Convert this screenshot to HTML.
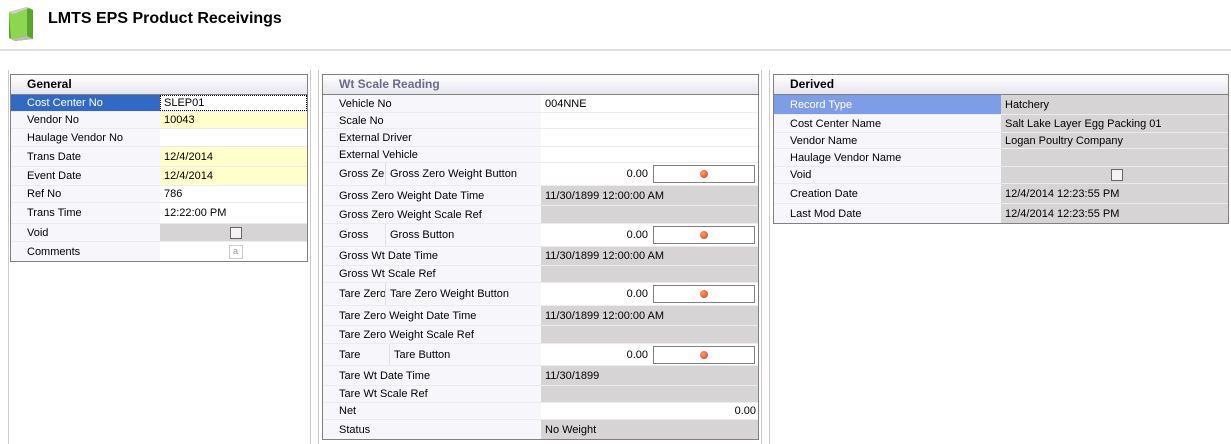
<!DOCTYPE html><html><head><style>
body{margin:0;width:1231px;height:444px;background:#fff;font-family:"Liberation Sans",Tahoma,sans-serif;font-size:11px;color:#000;position:relative;overflow:hidden}
.a{position:absolute}
.box{position:absolute;border:1px solid #808080;background:#fff}
.hd{height:19px;background:linear-gradient(#fff,#e6e6ee);border-bottom:1px solid #808080;font-weight:bold;font-size:12px;line-height:19px;padding-left:16px}
.r{display:flex;border-bottom:1px solid #ececf0;box-sizing:border-box}
.l{background:#f7f7fb;padding-left:16px;display:flex;align-items:center;box-sizing:border-box;white-space:nowrap;overflow:hidden}
.v{flex:1;display:flex;align-items:center;padding-left:4px;white-space:nowrap;box-sizing:border-box}
.g{background:#d6d4d4}.y{background:#ffffcc}
.sel{background:#316ac5;color:#fff}.sel2{background:#7d9de6;color:#fff}
.cb{width:10px;height:10px;border:1px solid #666;background:#f4f4f4;margin:auto}
.btn{width:102px;height:18px;border:1px solid #808080;box-sizing:border-box;margin-left:5px;margin-right:3px;display:flex;align-items:center;justify-content:center;background:#fff}
.dot{width:8px;height:8px;border-radius:50%;background:radial-gradient(circle at 35% 35%,#f9a070,#d83a10)}
.sub{border-left:1px solid #e0e0e8;padding-left:4px;margin-left:0;height:100%;display:flex;align-items:center}
</style></head><body>
<svg class="a" style="left:7px;top:3px" width="28" height="40"><path d="M2 9 L20 4 L26 7 L26 36 L8 38 L2 35Z" fill="#5aa62c"/><path d="M2 9 L20 4 L20 33 L4 36Z" fill="#8fd650"/><path d="M2 9 L20 4 L22 5 L6 11Z" fill="#cfcfcf"/><path d="M4 36 L20 33 L26 36 L8 38Z" fill="#bbb"/></svg>
<div class="a" style="left:48px;top:10px;font-size:16px;font-weight:bold">LMTS EPS Product Receivings</div>
<div class="a" style="left:0;top:49px;width:1231px;height:2px;background:#e0e0e0"></div>
<div class="a" style="left:8px;top:70px;width:1px;height:374px;background:#ccc"></div>
<div class="a" style="left:310px;top:70px;width:1px;height:374px;background:#ccc"></div>
<div class="a" style="left:318px;top:70px;width:1px;height:374px;background:#ccc"></div>
<div class="a" style="left:761px;top:70px;width:1px;height:374px;background:#ccc"></div>
<div class="a" style="left:769px;top:70px;width:1px;height:374px;background:#ccc"></div>

<div class="box" style="left:10px;top:74px;width:296px;height:186px">
<div class="hd">General</div>
<div class="r" style="height:17px"><div class="l sel" style="width:149px">Cost Center No</div><div class="v" style="outline:1px dotted #000;outline-offset:-1px">SLEP01</div></div>
<div class="r" style="height:17px"><div class="l" style="width:149px">Vendor No</div><div class="v y">10043</div></div>
<div class="r" style="height:18px"><div class="l" style="width:149px">Haulage Vendor No</div><div class="v"></div></div>
<div class="r" style="height:20px"><div class="l" style="width:149px">Trans Date</div><div class="v y">12/4/2014</div></div>
<div class="r" style="height:19px"><div class="l" style="width:149px">Event Date</div><div class="v y">12/4/2014</div></div>
<div class="r" style="height:17px"><div class="l" style="width:149px">Ref No</div><div class="v">786</div></div>
<div class="r" style="height:21px"><div class="l" style="width:149px">Trans Time</div><div class="v">12:22:00 PM</div></div>
<div class="r" style="height:18px"><div class="l" style="width:149px">Void</div><div class="v g"><div class="cb"></div></div></div>
<div class="r" style="height:19px;border:0"><div class="l" style="width:149px">Comments</div><div class="v"><div style="margin:auto;width:12px;height:12px;border:1px solid #ccc;font-size:9px;color:#999;text-align:center;line-height:11px">a</div></div></div>
</div>

<div class="box" style="left:322px;top:74px;width:435px;height:364px">
<div class="hd" style="color:#6a6a8c">Wt Scale Reading</div>
<div class="r" style="height:18px"><div class="l" style="width:218px">Vehicle No</div><div class="v">004NNE</div></div>
<div class="r" style="height:16px"><div class="l" style="width:218px">Scale No</div><div class="v"></div></div>
<div class="r" style="height:18px"><div class="l" style="width:218px">External Driver</div><div class="v"></div></div>
<div class="r" style="height:16px"><div class="l" style="width:218px">External Vehicle</div><div class="v"></div></div>
<div class="r" style="height:23px"><div class="l" style="width:218px"><span style="width:46px;overflow:hidden;display:inline-block">Gross Zero</span><span class="sub">Gross Zero Weight Button</span></div><div class="v" style="justify-content:flex-end">0.00<div class="btn"><div class="dot"></div></div></div></div>
<div class="r" style="height:20px"><div class="l" style="width:218px">Gross Zero Weight Date Time</div><div class="v g">11/30/1899 12:00:00 AM</div></div>
<div class="r" style="height:18px"><div class="l" style="width:218px">Gross Zero Weight Scale Ref</div><div class="v g"></div></div>
<div class="r" style="height:23px"><div class="l" style="width:218px"><span style="width:46px;display:inline-block">Gross</span><span class="sub">Gross Button</span></div><div class="v" style="justify-content:flex-end">0.00<div class="btn"><div class="dot"></div></div></div></div>
<div class="r" style="height:19px"><div class="l" style="width:218px">Gross Wt Date Time</div><div class="v g">11/30/1899 12:00:00 AM</div></div>
<div class="r" style="height:17px"><div class="l" style="width:218px">Gross Wt Scale Ref</div><div class="v g"></div></div>
<div class="r" style="height:23px"><div class="l" style="width:218px"><span style="width:46px;overflow:hidden;display:inline-block">Tare Zero</span><span class="sub">Tare Zero Weight Button</span></div><div class="v" style="justify-content:flex-end">0.00<div class="btn"><div class="dot"></div></div></div></div>
<div class="r" style="height:20px"><div class="l" style="width:218px">Tare Zero Weight Date Time</div><div class="v g">11/30/1899 12:00:00 AM</div></div>
<div class="r" style="height:18px"><div class="l" style="width:218px">Tare Zero Weight Scale Ref</div><div class="v g"></div></div>
<div class="r" style="height:22px"><div class="l" style="width:218px"><span style="width:50px;display:inline-block">Tare</span><span class="sub">Tare Button</span></div><div class="v" style="justify-content:flex-end">0.00<div class="btn"><div class="dot"></div></div></div></div>
<div class="r" style="height:20px"><div class="l" style="width:218px">Tare Wt Date Time</div><div class="v g">11/30/1899</div></div>
<div class="r" style="height:17px"><div class="l" style="width:218px">Tare Wt Scale Ref</div><div class="v g"></div></div>
<div class="r" style="height:17px"><div class="l" style="width:218px">Net</div><div class="v" style="justify-content:flex-end;padding-right:2px">0.00</div></div>
<div class="r" style="height:19px;border:0"><div class="l" style="width:218px">Status</div><div class="v g">No Weight</div></div>
</div>

<div class="box" style="left:773px;top:74px;width:454px;height:148px">
<div class="hd">Derived</div>
<div class="r" style="height:20px"><div class="l sel2" style="width:227px">Record Type</div><div class="v g">Hatchery</div></div>
<div class="r" style="height:18px"><div class="l" style="width:227px">Cost Center Name</div><div class="v g">Salt Lake Layer Egg Packing 01</div></div>
<div class="r" style="height:16px"><div class="l" style="width:227px">Vendor Name</div><div class="v g">Logan Poultry Company</div></div>
<div class="r" style="height:18px"><div class="l" style="width:227px">Haulage Vendor Name</div><div class="v g"></div></div>
<div class="r" style="height:17px"><div class="l" style="width:227px">Void</div><div class="v g"><div class="cb"></div></div></div>
<div class="r" style="height:20px"><div class="l" style="width:227px">Creation Date</div><div class="v g">12/4/2014 12:23:55 PM</div></div>
<div class="r" style="height:19px;border:0"><div class="l" style="width:227px">Last Mod Date</div><div class="v g">12/4/2014 12:23:55 PM</div></div>
</div>
</body></html>
